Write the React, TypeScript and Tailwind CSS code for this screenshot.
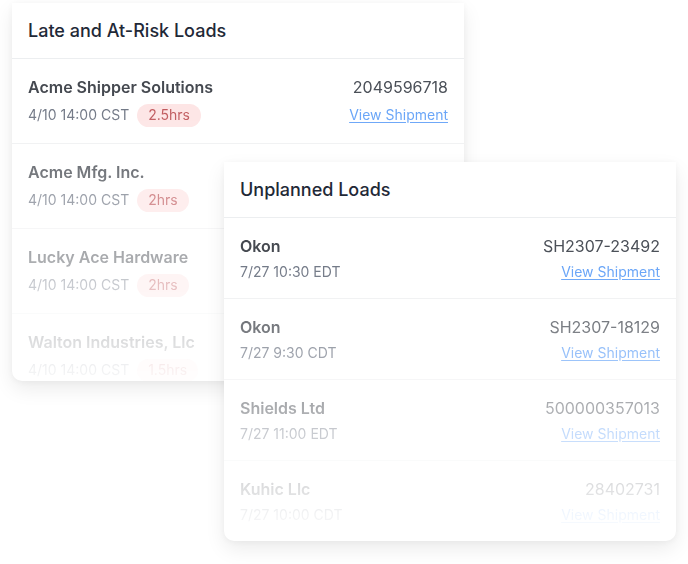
import React from "react";

type LateRow = { name: string; time: string; delay: string; id: string };
type PlanRow = { name: string; time: string; id: string };

const late: LateRow[] = [
  { name: "Acme Shipper Solutions", time: "4/10 14:00 CST", delay: "2.5hrs", id: "2049596718" },
  { name: "Acme Mfg. Inc.", time: "4/10 14:00 CST", delay: "2hrs", id: "2049596719" },
  { name: "Lucky Ace Hardware", time: "4/10 14:00 CST", delay: "2hrs", id: "2049596720" },
  { name: "Walton Industries, Llc", time: "4/10 14:00 CST", delay: "1.5hrs", id: "2049596721" },
];

const unplanned: PlanRow[] = [
  { name: "Okon", time: "7/27 10:30 EDT", id: "SH2307-23492" },
  { name: "Okon", time: "7/27 9:30 CDT", id: "SH2307-18129" },
  { name: "Shields Ltd", time: "7/27 11:00 EDT", id: "500000357013" },
  { name: "Kuhic Llc", time: "7/27 10:00 CDT", id: "28402731" },
];

const mask =
  "[mask-image:linear-gradient(to_bottom,black_10%,transparent_100%)] [-webkit-mask-image:linear-gradient(to_bottom,black_10%,transparent_100%)]";

export default function App() {
  return (
    <div
      className="relative w-[688px] h-[564px] bg-white overflow-hidden"
      style={{ fontFamily: "Inter, 'Noto Sans', sans-serif" }}
    >
      <div className="ml-3 mt-[3px] w-[452px] h-[378px] bg-white rounded-b-[10px] shadow-[0_8px_20px_rgba(0,0,0,0.08),0_1px_6px_rgba(0,0,0,0.04)] overflow-hidden flex flex-col">
        <div className="h-[56px] px-4 flex items-center border-b border-[#eceef0] shrink-0">
          <span className="text-[18px] font-medium text-[#1f2937]">Late and At-Risk Loads</span>
        </div>
        <div className={"flex flex-col flex-1 " + mask}>
          {late.map((r, i) => (
            <div key={r.name} className="px-4 py-4 flex justify-between border-b border-[#eeeff1] shrink-0">
              <div className="flex flex-col gap-1">
                <span className="text-[16px] leading-6 font-semibold text-[#454950]">{r.name}</span>
                <div className="flex items-center gap-2 h-6">
                  <span className="text-sm text-[#6b7280]">{r.time}</span>
                  <span className="h-[23px] px-[11px] rounded-full bg-[#fde4e4] text-sm text-[#bd5256] flex items-center">
                    {r.delay}
                  </span>
                </div>
              </div>
              <div className={"flex flex-col items-end gap-1 " + (i > 0 ? "invisible" : "")}>
                <span className="text-[16px] leading-6 text-[#4b5058]">{r.id}</span>
                <a className="text-sm leading-6 text-[#5f9ff7] underline underline-offset-2">View Shipment</a>
              </div>
            </div>
          ))}
        </div>
      </div>

      <div className="absolute left-[224px] top-[162px] w-[452px] bg-white rounded-b-[10px] shadow-[0_8px_20px_rgba(0,0,0,0.08),0_1px_6px_rgba(0,0,0,0.04)] overflow-hidden flex flex-col">
        <div className="h-[56px] px-4 flex items-center border-b border-[#eceef0]">
          <span className="text-[18px] font-medium text-[#1f2937]">Unplanned Loads</span>
        </div>
        <div className={"flex flex-col " + mask}>
          {unplanned.map((r, i) => (
            <div
              key={r.id}
              className={"px-4 py-4 flex justify-between " + (i < 3 ? "border-b border-[#eeeff1]" : "")}
            >
              <div className="flex flex-col gap-1">
                <span className="text-[16px] leading-6 font-semibold text-[#454950]">{r.name}</span>
                <span className="text-sm leading-5 text-[#6b7280]">{r.time}</span>
              </div>
              <div className="flex flex-col items-end gap-1">
                <span className="text-[16px] leading-6 text-[#4b5058]">{r.id}</span>
                <a className="text-sm leading-5 text-[#5f9ff7] underline underline-offset-2">View Shipment</a>
              </div>
            </div>
          ))}
        </div>
      </div>
    </div>
  );
}
